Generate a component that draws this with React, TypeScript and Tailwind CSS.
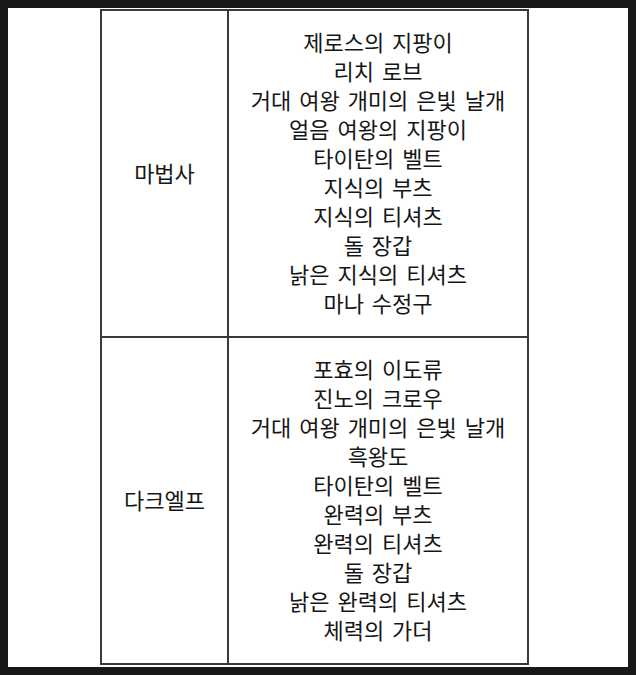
import React from "react";

const rows = [
  {
    label: "마법사",
    items: [
      "제로스의 지팡이",
      "리치 로브",
      "거대 여왕 개미의 은빛 날개",
      "얼음 여왕의 지팡이",
      "타이탄의 벨트",
      "지식의 부츠",
      "지식의 티셔츠",
      "돌 장갑",
      "낡은 지식의 티셔츠",
      "마나 수정구",
    ],
  },
  {
    label: "다크엘프",
    items: [
      "포효의 이도류",
      "진노의 크로우",
      "거대 여왕 개미의 은빛 날개",
      "흑왕도",
      "타이탄의 벨트",
      "완력의 부츠",
      "완력의 티셔츠",
      "돌 장갑",
      "낡은 완력의 티셔츠",
      "체력의 가더",
    ],
  },
];

export default function App() {
  return (
    <div
      className="w-[636px] h-[675px] bg-[#181818] p-[8px]"
      style={{ fontFamily: '"Noto Sans CJK KR", "Noto Sans", sans-serif' }}
    >
      <div className="w-[620px] h-[659px] bg-white pl-[92px] pt-[1px]">
        <div className="w-[429px] h-[656px] border-2 border-[#3a3a3a] flex flex-col text-[#161616] text-[22px] leading-[29px] [word-spacing:3px]">
          {rows.map((r, i) => (
            <div
              key={i}
              className={`flex-1 flex ${i > 0 ? "border-t-2 border-[#3a3a3a]" : ""}`}
            >
              <div className="w-[127px] border-r-2 border-[#3a3a3a] flex items-center justify-center pb-[3px]">
                {r.label}
              </div>
              <div className="flex-1 flex flex-col items-center justify-center pb-[3px]">
                {r.items.map((t, j) => (
                  <div key={j} className="whitespace-nowrap">
                    {t}
                  </div>
                ))}
              </div>
            </div>
          ))}
        </div>
      </div>
    </div>
  );
}
